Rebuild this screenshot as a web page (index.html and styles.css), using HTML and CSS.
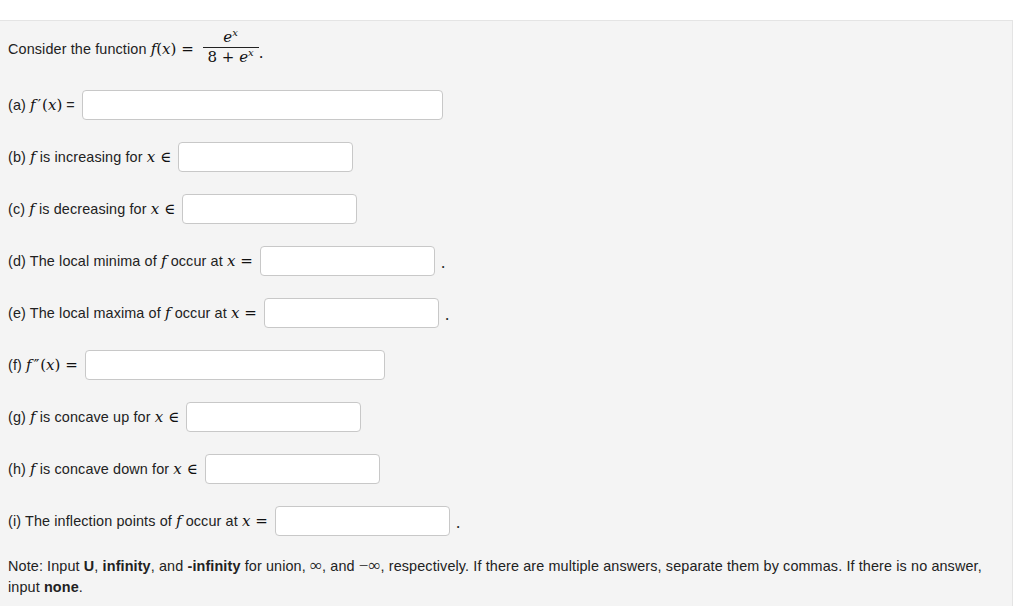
FILE: index.html
```html
<!DOCTYPE html>
<html>
<head>
<meta charset="utf-8">
<link rel="stylesheet" href="styles.css">
</head>
<body>
<div class="panel">
  <div class="intro">
    <span>Consider the function </span>
    <span class="m"><i>f</i>(<i>x</i>) = </span>
    <span class="frac">
      <span class="num m"><i>e</i><sup><i>x</i></sup></span>
      <span class="den m">8 + <i>e</i><sup><i>x</i></sup></span>
    </span>
    <span class="m dot">.</span>
  </div>

  <div class="row">
    <span>(a) </span><span class="m"><i>f</i><span class="pr">′</span>(<i>x</i>)</span><span> =</span>
    <input class="box w-a" type="text">
  </div>
  <div class="row">
    <span>(b) </span><span class="m"><i>f</i></span><span> is increasing for </span><span class="m"><i>x</i> ∈</span>
    <input class="box w-s" type="text">
  </div>
  <div class="row">
    <span>(c) </span><span class="m"><i>f</i></span><span> is decreasing for </span><span class="m"><i>x</i> ∈</span>
    <input class="box w-s" type="text">
  </div>
  <div class="row">
    <span>(d) The local minima of </span><span class="m"><i>f</i></span><span> occur at </span><span class="m"><i>x</i> =</span>
    <input class="box w-s" type="text"><span class="after">.</span>
  </div>
  <div class="row">
    <span>(e) The local maxima of </span><span class="m"><i>f</i></span><span> occur at </span><span class="m"><i>x</i> =</span>
    <input class="box w-s" type="text"><span class="after">.</span>
  </div>
  <div class="row">
    <span>(f) </span><span class="m"><i>f</i><span class="pr">″</span>(<i>x</i>) =</span>
    <input class="box w-f" type="text">
  </div>
  <div class="row">
    <span>(g) </span><span class="m"><i>f</i></span><span> is concave up for </span><span class="m"><i>x</i> ∈</span>
    <input class="box w-s" type="text">
  </div>
  <div class="row">
    <span>(h) </span><span class="m"><i>f</i></span><span> is concave down for </span><span class="m"><i>x</i> ∈</span>
    <input class="box w-s" type="text">
  </div>
  <div class="row">
    <span>(i) The inflection points of </span><span class="m"><i>f</i></span><span> occur at </span><span class="m"><i>x</i> =</span>
    <input class="box w-s" type="text"><span class="after">.</span>
  </div>

  <p class="note">Note: Input <b>U</b>, <b>infinity</b>, and <b>-infinity</b> for union, <span class="inf">∞</span>, and <span class="inf">−∞</span>, respectively. If there are multiple answers, separate them by commas. If there is no answer, input <b>none</b>.</p>
</div>
</body>
</html>
```

FILE: styles.css
```css
html, body {
  margin: 0;
  padding: 0;
  background: #ffffff;
}

body {
  padding-top: 20px;
  font-family: "Liberation Sans", Arial, Helvetica, sans-serif;
  font-size: 14.4px;
  letter-spacing: 0.12px;
  color: #222;
}

.panel {
  width: 1013px;
  min-height: 586px;
  box-sizing: border-box;
  background: #f4f4f4;
  border-top: 1px solid #e4e4e4;
  border-right: 1px solid #e4e4e4;
  padding: 0 0 20px 8px;
}

.m {
  font-family: "DejaVu Serif", "Liberation Serif", serif;
  font-size: 15px;
  letter-spacing: 0;
  color: #111;
}

.m i {
  font-style: italic;
}

.pr {
  padding: 0 1px 0 2px;
}

.intro {
  height: 55px;
  display: flex;
  align-items: center;
  white-space: pre;
}

.frac {
  display: inline-flex;
  flex-direction: column;
  align-items: center;
  margin: 0 2px 0 6px;
  position: relative;
  top: -1px;
}

.frac .num {
  font-size: 15px;
  line-height: 17px;
  padding: 0 2px 1px;
  border-bottom: 1px solid #222;
  width: 100%;
  text-align: center;
}

.frac .den {
  font-size: 15px;
  line-height: 17px;
  padding: 1px 3px 0;
}

.frac sup {
  font-size: 10px;
  vertical-align: 6px;
  line-height: 0;
}

.dot {
  position: relative;
  top: 4px;
}

.row {
  display: flex;
  align-items: center;
  height: 30px;
  margin-top: 22px;
  white-space: pre;
}

.intro + .row {
  margin-top: 14px;
}

.box {
  height: 30px;
  box-sizing: border-box;
  border: 1px solid #c8c8c8;
  border-radius: 4px;
  background: #fff;
  margin: 0 0 0 7px;
  padding: 0 6px;
  font: inherit;
}

.w-a { width: 361px; }
.w-s { width: 175px; }
.w-f { width: 300px; }

.after {
  margin-left: 6px;
  font-family: "DejaVu Serif", serif;
  font-size: 15px;
  position: relative;
  top: 2px;
}

.note {
  margin: 20px 20px 0 0;
  line-height: 21px;
}

.inf {
  font-family: "Liberation Serif", serif;
  font-size: 17px;
  letter-spacing: 0;
  line-height: 1;
}

.note b {
  font-weight: bold;
}
```
